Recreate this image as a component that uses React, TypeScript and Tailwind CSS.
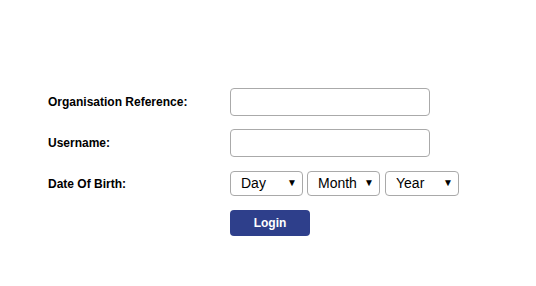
import { useState } from 'react';

const font = { fontFamily: '"Liberation Sans", Arial, sans-serif' };

function DateSelect({ label, options, className }: { label: string; options: string[]; className: string }) {
  const [value, setValue] = useState('');
  return (
    <div className={`relative h-[25px] ${className}`}>
      <select
        value={value}
        onChange={(e) => setValue(e.target.value)}
        className="appearance-none w-full h-full border border-[#a9a9a9] rounded-[4px] bg-white pl-[10px] pr-5 text-[14px] text-black outline-none"
      >
        <option value="">{label}</option>
        {options.map((o) => (
          <option key={o} value={o}>
            {o}
          </option>
        ))}
      </select>
      <span className="pointer-events-none absolute right-[6px] top-[4px] text-[10px] text-black">▼</span>
    </div>
  );
}

export default function App() {
  const days = Array.from({ length: 31 }, (_, i) => String(i + 1));
  const months = ['Jan', 'Feb', 'Mar', 'Apr', 'May', 'Jun', 'Jul', 'Aug', 'Sep', 'Oct', 'Nov', 'Dec'];
  const years = Array.from({ length: 80 }, (_, i) => String(2010 - i));

  return (
    <div className="w-[536px] h-[286px] bg-white pt-[88px] pl-[48px]" style={font}>
      <form className="flex flex-col" onSubmit={(e) => e.preventDefault()}>
        {/* Organisation reference */}
        <div className="flex items-center h-[28px]">
          <label className="w-[182px] text-[12px] font-bold text-black">Organisation Reference:</label>
          <input className="w-[200px] h-[28px] border border-[#aaaaaa] rounded-[4px] px-2 text-[14px] outline-none" />
        </div>

        {/* Username */}
        <div className="flex items-center h-[28px] mt-[13px]">
          <label className="w-[182px] text-[12px] font-bold text-black">Username:</label>
          <input className="w-[200px] h-[28px] border border-[#aaaaaa] rounded-[4px] px-2 text-[14px] outline-none" />
        </div>

        {/* Date of birth */}
        <div className="flex items-center h-[25px] mt-[14px]">
          <label className="w-[182px] text-[12px] font-bold text-black">Date Of Birth:</label>
          <div className="flex">
            <DateSelect label="Day" options={days} className="w-[73px]" />
            <DateSelect label="Month" options={months} className="w-[73px] ml-[4px]" />
            <DateSelect label="Year" options={years} className="w-[74px] ml-[5px]" />
          </div>
        </div>

        <div className="flex mt-[14px] pl-[182px]">
          <button
            type="submit"
            className="w-[80px] h-[26px] rounded-[4px] bg-[#2e3f8b] text-white text-[12px] font-bold"
          >
            Login
          </button>
        </div>
      </form>
    </div>
  );
}
